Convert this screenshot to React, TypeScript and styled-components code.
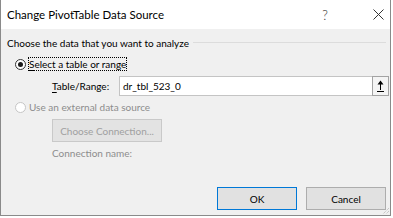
import React from 'react';
import styled, { createGlobalStyle } from 'styled-components';

/* ── Page ── */

const GlobalStyle = createGlobalStyle`
  html, body {
    margin: 0;
    padding: 0;
    background: #ffffff;
  }
  body {
    font-family: Lato, "Noto Sans", sans-serif;
    font-size: 10px;
    color: #000000;
  }
`;

const Window = styled.div`
  position: relative;
  width: 391px;
  height: 216px;
  box-sizing: border-box;
  border: 1px solid #8a8a8a;
  border-top: none;
  background: #f0f0f0;
  display: flex;
  flex-direction: column;
`;

/* ── Title bar ── */

const TitleBar = styled.div`
  flex: none;
  height: 29px;
  background: #ffffff;
  display: flex;
  align-items: center;
  padding-left: 6px;
`;

const TitleText = styled.span`
  flex: 1;
  line-height: 16px;
  font-size: 11.5px;
`;

const CaptionButton = styled.div<{ $width: number }>`
  width: ${({ $width }) => $width}px;
  height: 29px;
  display: flex;
  align-items: center;
  justify-content: center;
  color: #333333;
  font-size: 13px;
  font-weight: 300;
`;

/* ── Body ── */

const Body = styled.div`
  flex: 1;
  display: flex;
  flex-direction: column;
  padding: 6px 1px 5px 6px;
  line-height: 16px;
  white-space: nowrap;
`;

const GroupHeader = styled.div`
  display: flex;
  align-items: center;
  height: 16px;
`;

const Rule = styled.div`
  flex: 1;
  height: 1px;
  margin: -1px 3px 0 4px;
  background: #dcdcdc;
`;

const OptionRow = styled.div<{ $gap: number }>`
  display: flex;
  align-items: center;
  height: 16px;
  margin-top: ${({ $gap }) => $gap}px;
  padding-left: 8px;
`;

const Radio = styled.span<{ $checked?: boolean; $disabled?: boolean }>`
  position: relative;
  flex: none;
  width: 11px;
  height: 11px;
  box-sizing: border-box;
  border-radius: 50%;
  background: #ffffff;
  border: 1px solid ${({ $disabled }) => ($disabled ? '#c6c6c6' : '#333333')};

  &::after {
    content: '';
    display: ${({ $checked }) => ($checked ? 'block' : 'none')};
    position: absolute;
    left: 2px;
    top: 2px;
    width: 5px;
    height: 5px;
    border-radius: 50%;
    background: #1a1a1a;
  }
`;

const FocusLabel = styled.span`
  margin-left: 2px;
  border: 1px dotted #000000;
  line-height: 12px;
`;

const OptionLabel = styled.span<{ $disabled?: boolean }>`
  margin-left: 3px;
  color: ${({ $disabled }) => ($disabled ? '#8d8d8d' : '#000000')};
`;

const FieldRow = styled.div`
  display: flex;
  align-items: center;
  margin-top: 4px;
  padding-left: 45px;
`;

const FieldLabel = styled.span`
  width: 67px;
  flex: none;
`;

const InputBox = styled.div`
  flex: 1;
  height: 20px;
  box-sizing: border-box;
  display: flex;
  border: 1px solid #c4c4c4;
  background: #ffffff;
`;

const InputText = styled.span`
  flex: 1;
  padding-left: 3px;
  line-height: 18px;
`;

const RangeButton = styled.div`
  flex: none;
  width: 17px;
  height: 20px;
  margin: -1px -1px -1px 0;
  box-sizing: border-box;
  border: 1px solid #a3a3a3;
  background: #f4f4f4;
  display: flex;
  align-items: center;
  justify-content: center;
`;

const Button = styled.div<{ $width: number; $default?: boolean; $disabled?: boolean }>`
  width: ${({ $width }) => $width}px;
  height: 23px;
  box-sizing: border-box;
  display: flex;
  align-items: center;
  justify-content: center;
  background: ${({ $disabled }) => ($disabled ? '#e3e3e3' : '#e1e1e1')};
  border: 1px solid
    ${({ $default, $disabled }) => ($default ? '#0078d7' : $disabled ? '#c9c9c9' : '#adadad')};
  color: ${({ $disabled }) => ($disabled ? '#a0a0a0' : '#000000')};
`;

const ConnectionButton = styled(Button)`
  margin-top: 4px;
  margin-left: 45px;
`;

const ConnectionLabel = styled.div`
  margin-top: 3px;
  padding-left: 45px;
  color: #8d8d8d;
`;

const Footer = styled.div`
  margin-top: auto;
  display: flex;
  justify-content: flex-end;
  gap: 9px;
  padding-right: 3px;
`;

const Grip = styled.svg`
  position: absolute;
  right: 0;
  bottom: 0;
`;

const Mnemonic = styled.span`
  text-decoration: underline;
  text-underline-offset: 2px;
`;

/* ── Component ── */

const App: React.FC = () => (
  <>
    <GlobalStyle />
    <Window>
      <TitleBar>
        <TitleText>Change PivotTable Data Source</TitleText>
        <CaptionButton $width={24}>?</CaptionButton>
        <CaptionButton $width={29} />
        <CaptionButton $width={24}>
          <svg width="11" height="11" viewBox="0 0 11 11">
            <path d="M0.5 0.5 L10.5 10.5 M10.5 0.5 L0.5 10.5" stroke="#333" strokeWidth="1" />
          </svg>
        </CaptionButton>
      </TitleBar>

      <Body>
        <GroupHeader>
          <span>Choose the data that you want to analyze</span>
          <Rule />
        </GroupHeader>

        <OptionRow $gap={5}>
          <Radio $checked />
          <FocusLabel>
            <Mnemonic>S</Mnemonic>elect a table or range
          </FocusLabel>
        </OptionRow>

        <FieldRow>
          <FieldLabel>
            <Mnemonic>T</Mnemonic>able/Range:
          </FieldLabel>
          <InputBox>
            <InputText>dr_tbl_523_0</InputText>
            <RangeButton>
              <svg width="7" height="13" viewBox="0 0 7 13">
                <path d="M3.5 0.5 L6.5 4.5 L0.5 4.5 Z" fill="#000" />
                <rect x="3" y="4" width="1" height="6" fill="#000" />
                <rect x="0" y="11" width="7" height="1" fill="#000" />
              </svg>
            </RangeButton>
          </InputBox>
        </FieldRow>

        <OptionRow $gap={3}>
          <Radio $disabled />
          <OptionLabel $disabled>Use an external data source</OptionLabel>
        </OptionRow>

        <ConnectionButton $width={110} $disabled>
          Choose Connection...
        </ConnectionButton>

        <ConnectionLabel>Connection name:</ConnectionLabel>

        <Footer>
          <Button $width={80} $default>
            OK
          </Button>
          <Button $width={80}>Cancel</Button>
        </Footer>
      </Body>

      <Grip width="9" height="9" viewBox="0 0 9 9">
        <path d="M8 2 L2 8 M8 5 L5 8 M8 8 L8 8" stroke="#b5b5b5" strokeWidth="1" strokeDasharray="1 1" />
      </Grip>
    </Window>
  </>
);

export default App;
